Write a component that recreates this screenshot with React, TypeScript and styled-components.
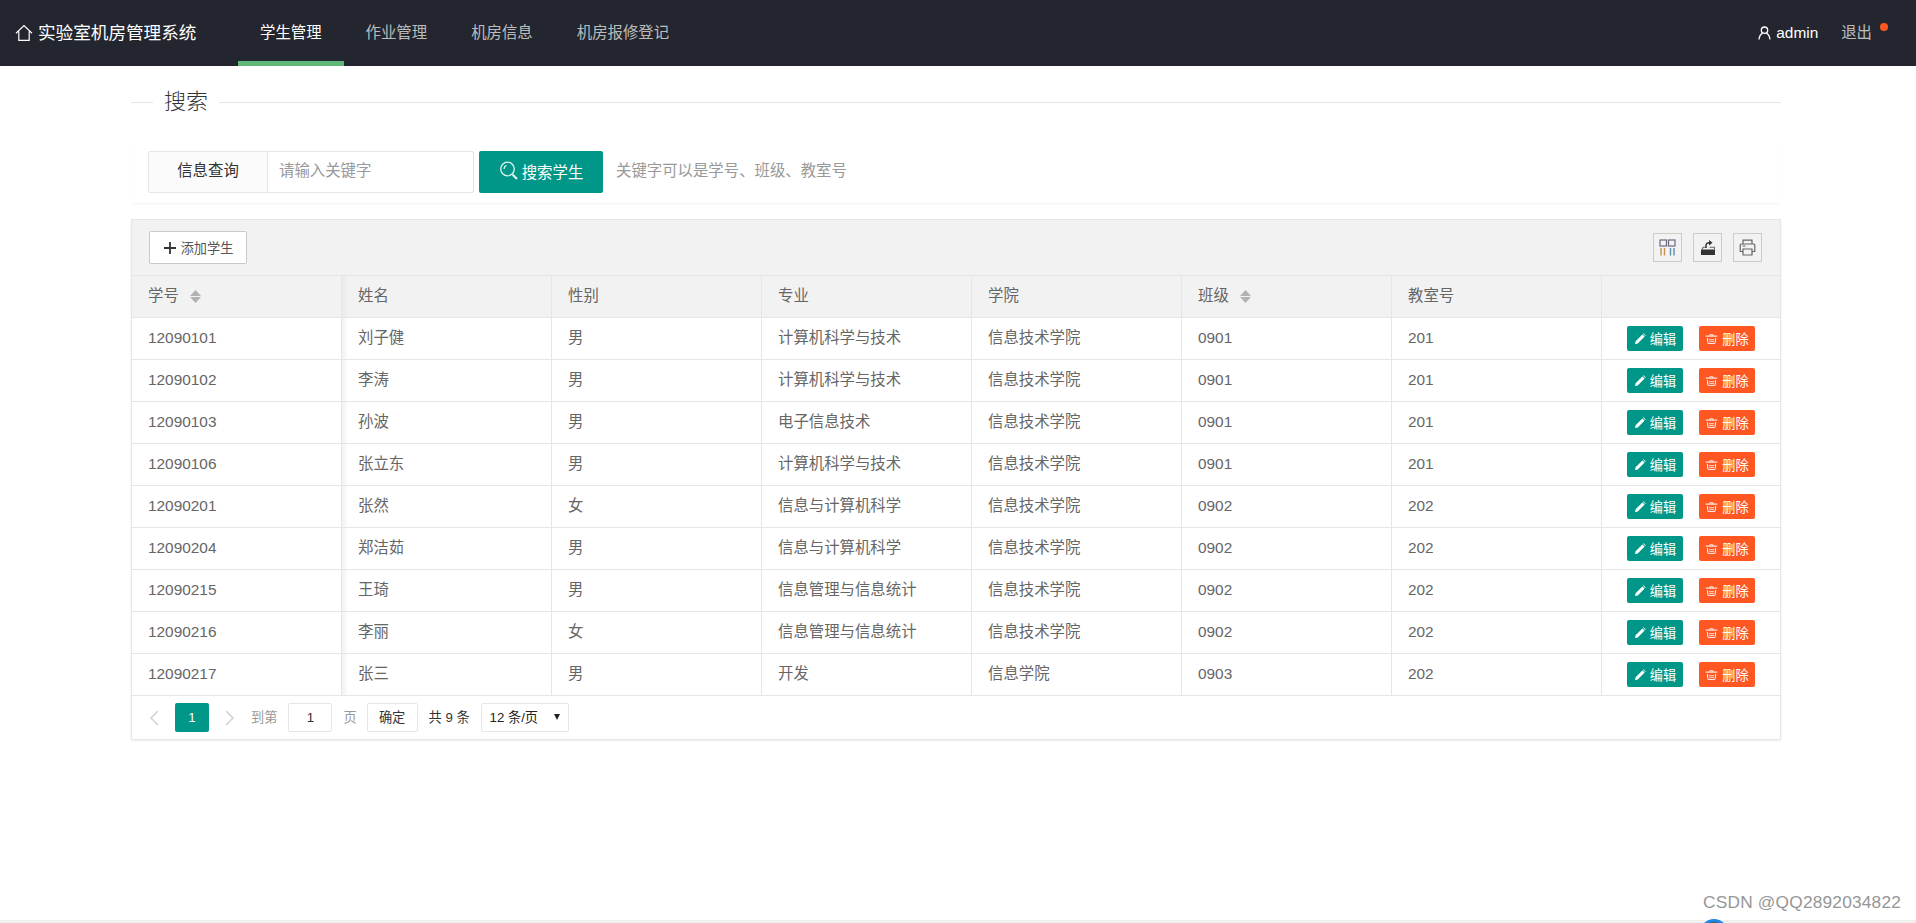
import React from "react";
import styled, { createGlobalStyle } from "styled-components";

const CJK = `"Liberation Sans", "Noto Sans CJK SC", sans-serif`;

const GlobalStyle = createGlobalStyle`
  html, body {
    margin: 0;
    padding: 0;
    background: #fff;
    overflow: hidden;
  }
  * {
    box-sizing: border-box;
  }
  body {
    font-family: ${CJK};
    font-size: 15.4px;
    line-height: 20px;
    color: #666;
  }
`;

const Page = styled.div`
  position: relative;
  display: flex;
  flex-direction: column;
  height: 923px;
  overflow: hidden;
`;

const Header = styled.header`
  display: flex;
  align-items: stretch;
  flex: 0 0 66px;
  height: 66px;
  background: #23262e;
`;

const Logo = styled.div`
  display: flex;
  align-items: center;
  gap: 5px;
  width: 238px;
  padding-left: 15px;
  color: #fff;
  font-size: 17.6px;
`;

const Nav = styled.nav`
  display: flex;
  flex: 1;
`;

const NavItem = styled.a<{ $active?: boolean }>`
  display: flex;
  align-items: center;
  justify-content: center;
  padding: 0 22px;
  color: ${(p) => (p.$active ? "#fff" : "rgba(255, 255, 255, 0.7)")};
  border-bottom: 5px solid ${(p) => (p.$active ? "#5fb878" : "transparent")};
  border-top: 5px solid transparent;
  font-size: 15.4px;
`;

const UserArea = styled.div`
  display: flex;
  align-items: center;
  padding-right: 44px;
`;

const UserName = styled.span`
  display: flex;
  align-items: center;
  gap: 5px;
  color: #fff;
  font-size: 15.4px;
`;

const Logout = styled.span`
  position: relative;
  margin-left: 23px;
  color: rgba(255, 255, 255, 0.7);
  font-size: 15.4px;
`;

const Dot = styled.i`
  position: absolute;
  top: 0;
  right: -16px;
  width: 8px;
  height: 8px;
  border-radius: 50%;
  background: #ff5722;
`;

const Main = styled.main`
  display: flex;
  flex: 1;
  flex-direction: column;
  padding: 0 135px 0 131px;
`;

const Legend = styled.div`
  display: flex;
  align-items: center;
  height: 36px;
  margin-top: 18px;
  color: #333;
  font-size: 22px;
  font-weight: 300;

  &::before,
  &::after {
    content: "";
    height: 1px;
    background: #e6e6e6;
  }
  &::before {
    flex: 0 0 22px;
  }
  &::after {
    flex: 1;
  }
`;

const LegendText = styled.span`
  padding: 0 11px;
`;

const SearchPanel = styled.div`
  display: flex;
  align-items: center;
  height: 63px;
  margin-top: 20px;
  padding: 0 17px;
  border-radius: 2px;
  box-shadow: 0 1px 2px rgba(0, 0, 0, 0.05);
`;

const SearchGroup = styled.div`
  display: flex;
  width: 326px;
  height: 42px;
  border: 1px solid #e6e6e6;
  border-radius: 2px;
`;

const SearchLabel = styled.label`
  display: flex;
  align-items: center;
  justify-content: center;
  width: 119px;
  padding-bottom: 1px;
  background: #fbfbfb;
  border-right: 1px solid #e6e6e6;
  color: #333;
  font-size: 15.4px;
`;

const SearchInput = styled.div`
  display: flex;
  flex: 1;
  align-items: center;
  padding: 0 0 1px 11px;
  color: #999;
  font-size: 15.4px;
`;

const SearchButton = styled.button`
  display: flex;
  align-items: center;
  justify-content: center;
  gap: 3px;
  width: 124px;
  height: 42px;
  margin-left: 5px;
  padding: 0 0 1px;
  border: 0;
  border-radius: 2px;
  background: #009688;
  color: #fff;
  font-family: inherit;
  font-size: 15.4px;
`;

const Hint = styled.span`
  margin: 0 0 1px 13px;
  color: #999;
  font-size: 15.4px;
`;

const TableCard = styled.section`
  margin-top: 16px;
  border: 1px solid #e6e6e6;
  box-shadow: 0 1px 2px rgba(0, 0, 0, 0.08);
`;

const Toolbar = styled.div`
  display: flex;
  align-items: center;
  justify-content: space-between;
  height: 56px;
  padding: 0 18px 0 17px;
  background: #f2f2f2;
  border-bottom: 1px solid #e6e6e6;
`;

const AddButton = styled.button`
  display: flex;
  align-items: center;
  justify-content: center;
  gap: 4px;
  width: 98px;
  height: 33px;
  padding: 0;
  border: 1px solid #c9c9c9;
  border-radius: 2px;
  background: #fff;
  color: #555;
  font-family: inherit;
  font-size: 13.2px;
`;

const ToolGroup = styled.div`
  display: flex;
  gap: 11px;
`;

const ToolButton = styled.div`
  display: flex;
  align-items: center;
  justify-content: center;
  width: 29px;
  height: 29px;
  border: 1px solid #ccc;
`;

const TableGrid = styled.div`
  display: grid;
  grid-template-columns: repeat(7, 210px) 1fr;
`;

const cellBackground = (head?: boolean, fixed?: boolean) => {
  if (head && fixed) return "linear-gradient(90deg, #e9e9e9, #f2f2f2 6px)";
  if (head) return "#f2f2f2";
  if (fixed) return "linear-gradient(90deg, #f0f0f0, #fff 6px)";
  return "#fff";
};

const Cell = styled.div<{ $head?: boolean; $fixed?: boolean; $last?: boolean }>`
  display: flex;
  align-items: center;
  gap: ${(p) => (p.$last ? "16px" : "10px")};
  height: 42px;
  padding: ${(p) => (p.$last ? "0 25px" : "0 16px 1px")};
  background: ${(p) => cellBackground(p.$head, p.$fixed)};
  border-bottom: 1px solid #e6e6e6;
  border-right: ${(p) => (p.$last ? "0" : "1px solid #e6e6e6")};
  color: #666;
  font-size: 15.4px;
`;

const SortIcon = styled.svg`
  width: 11px;
  height: 13px;
  margin-left: 1px;
`;

const RowButton = styled.button<{ $danger?: boolean }>`
  display: flex;
  align-items: center;
  justify-content: center;
  gap: 4px;
  width: 56px;
  height: 25px;
  padding: 0;
  border: 0;
  border-radius: 2px;
  background: ${(p) => (p.$danger ? "#ff5722" : "#009688")};
  color: #fff;
  font-family: inherit;
  font-size: 13.2px;
`;

const Pager = styled.div`
  display: flex;
  align-items: center;
  height: 43px;
  padding-left: 16px;
  color: #333;
  font-size: 13.2px;
`;

const PageArrow = styled.svg`
  flex: 0 0 14px;
  height: 16px;
`;

const PageCurrent = styled.span`
  display: flex;
  align-items: center;
  justify-content: center;
  width: 34px;
  height: 29px;
  margin: 0 13px;
  border-radius: 2px;
  background: #009688;
  color: #fff;
`;

const PagerMuted = styled.span<{ $gap: number }>`
  color: #999;
  margin-left: ${(p) => p.$gap}px;
`;

const PagerBox = styled.span`
  display: flex;
  align-items: center;
  height: 29px;
  border: 1px solid #e6e6e6;
  border-radius: 2px;
  background: #fff;
  color: #333;
`;

const PageInput = styled(PagerBox)`
  justify-content: center;
  width: 44px;
  margin-left: 11px;
`;

const PageOk = styled(PagerBox)`
  justify-content: center;
  width: 51px;
  margin-left: 10px;
`;

const PageTotal = styled.span`
  margin-left: 11px;
  color: #333;
`;

const PageSelect = styled(PagerBox)`
  position: relative;
  width: 88px;
  margin-left: 11px;
  padding-left: 8px;
  color: #222;
`;

const SelectCaret = styled.i`
  position: absolute;
  top: 10px;
  right: 8px;
  border-left: 3.5px solid transparent;
  border-right: 3.5px solid transparent;
  border-top: 6px solid #222;
`;

const BottomStrip = styled.div`
  flex: 0 0 3px;
  background: #f0f0f0;
`;

const Watermark = styled.div`
  position: absolute;
  right: 15px;
  bottom: 11px;
  color: #969696;
  font-size: 17.3px;
  letter-spacing: 0.2px;
`;

const Avatar = styled.i`
  position: absolute;
  left: 1700px;
  top: 919px;
  width: 28px;
  height: 28px;
  border-radius: 50%;
  border: 3px solid #1e88e5;
  background: #555;
`;

type Student = {
  id: string;
  name: string;
  sex: string;
  major: string;
  college: string;
  cls: string;
  room: string;
};

const STUDENTS: Student[] = [
  { id: "12090101", name: "刘子健", sex: "男", major: "计算机科学与技术", college: "信息技术学院", cls: "0901", room: "201" },
  { id: "12090102", name: "李涛", sex: "男", major: "计算机科学与技术", college: "信息技术学院", cls: "0901", room: "201" },
  { id: "12090103", name: "孙波", sex: "男", major: "电子信息技术", college: "信息技术学院", cls: "0901", room: "201" },
  { id: "12090106", name: "张立东", sex: "男", major: "计算机科学与技术", college: "信息技术学院", cls: "0901", room: "201" },
  { id: "12090201", name: "张然", sex: "女", major: "信息与计算机科学", college: "信息技术学院", cls: "0902", room: "202" },
  { id: "12090204", name: "郑洁茹", sex: "男", major: "信息与计算机科学", college: "信息技术学院", cls: "0902", room: "202" },
  { id: "12090215", name: "王琦", sex: "男", major: "信息管理与信息统计", college: "信息技术学院", cls: "0902", room: "202" },
  { id: "12090216", name: "李丽", sex: "女", major: "信息管理与信息统计", college: "信息技术学院", cls: "0902", room: "202" },
  { id: "12090217", name: "张三", sex: "男", major: "开发", college: "信息学院", cls: "0903", room: "202" },
];

const NAV_ITEMS = ["学生管理", "作业管理", "机房信息", "机房报修登记"];

const HomeIcon = () => (
  <svg width="18" height="18" viewBox="0 0 18 18" fill="none" stroke="#fff" strokeWidth="1.2">
    <path d="M1 9.200 9 1.600l8 7.600M3.800 7.500v8.900h10.400V7.500" />
  </svg>
);

const UserIcon = () => (
  <svg width="13" height="14" viewBox="0 0 13 14" fill="none" stroke="#fff" strokeWidth="1.3">
    <circle cx="6.500" cy="4.200" r="3.200" />
    <path d="M1 13.500c.3-3 2-5.500 3.400-6.200M12 13.500c-.3-3-2-5.500-3.400-6.200" />
  </svg>
);

const SearchIcon = () => (
  <svg width="20" height="20" viewBox="0 0 20 20" fill="none" stroke="#dff5f1" strokeWidth="1.3">
    <circle cx="8.500" cy="8" r="6.800" />
    <path d="M5 8c0-1.800 1-3 2.400-3.600" />
    <path d="m13.500 13.500 4.500 4.500" strokeWidth="2.200" />
  </svg>
);

const PlusIcon = () => (
  <svg width="14" height="14" viewBox="0 0 14 14" stroke="#333" strokeWidth="1.800">
    <path d="M7 1v12M1 7h12" />
  </svg>
);

const EditIcon = () => (
  <svg width="12" height="12" viewBox="0 0 12 12" fill="#fff">
    <path d="M1 11l.6-2.800L8.400 1.400l2.200 2.200-6.800 6.800zM9 .8l.6-.5 2.100 2.100-.5.6z" />
  </svg>
);

const TrashIcon = () => (
  <svg width="13" height="12" viewBox="0 0 13 12" fill="none" stroke="#ffe3dc" strokeWidth="1.200">
    <path d="M.8 3.200h11.400M4.500 3c.2-1 .8-1.500 2-1.500s1.800.5 2 1.500M2.500 5c0 3 .3 5.300 1 5.500h6c.7-.2 1-2.500 1-5.500" />
    <path d="M4 6.700h5M4.300 8.600h4.400" strokeWidth="1" />
  </svg>
);

const ColsIcon = () => (
  <svg width="17" height="17" viewBox="0 0 17 17" fill="none" strokeWidth="1.2">
    <rect x="1" y="1" width="6.500" height="6" stroke="#6a6a80" />
    <rect x="9.500" y="1" width="6.500" height="6" stroke="#6a6a80" />
    <path d="M2 9v7.500M5.500 9v7.500" stroke="#c9924a" strokeWidth="1.400" />
    <path d="M11.500 9v7.500M15 9v7.500" stroke="#5c8fb0" strokeWidth="1.400" />
  </svg>
);

const ExportIcon = () => (
  <svg width="16" height="17" viewBox="0 0 16 17">
    <path d="M1 10.500h14V16H1z" fill="#333" />
    <path d="M2 10.500l1.200-2.300h2.600M9.500 8.200h5v2.300" fill="none" stroke="#667" strokeWidth="1.100" />
    <path d="M6 9V6.500c0-1.800 1.400-2.700 3.500-2.700" fill="none" stroke="#333" strokeWidth="1.500" />
    <path d="M9 1l3.500 2.700L9 6.400z" fill="#333" />
  </svg>
);

const PrintIcon = () => (
  <svg width="17" height="17" viewBox="0 0 17 17" fill="none" stroke="#666" strokeWidth="1.200">
    <path d="M4 5V1.200h9V5M4 12.500H1.200V6.200c0-.7.5-1.200 1.200-1.200h12.200c.7 0 1.200.5 1.200 1.200v6.300H13" />
    <path d="M4 10h9v6H4zM3.500 7h3" />
  </svg>
);

const SortGlyph = () => (
  <SortIcon viewBox="0 0 11 13" fill="#b2b2b2">
    <path d="M5.500 0 11 6H0zM0 7h11l-5.500 6z" />
  </SortIcon>
);

function App() {
  return (
    <Page>
      <GlobalStyle />
      <Header>
        <Logo>
          <HomeIcon />
          实验室机房管理系统
        </Logo>
        <Nav>
          {NAV_ITEMS.map((item, key) => (
            <NavItem key={item} $active={key === 0}>
              {item}
            </NavItem>
          ))}
        </Nav>
        <UserArea>
          <UserName>
            <UserIcon />
            admin
          </UserName>
          <Logout>
            退出
            <Dot />
          </Logout>
        </UserArea>
      </Header>

      <Main>
        <Legend>
          <LegendText>搜索</LegendText>
        </Legend>

        <SearchPanel>
          <SearchGroup>
            <SearchLabel>信息查询</SearchLabel>
            <SearchInput>请输入关键字</SearchInput>
          </SearchGroup>
          <SearchButton>
            <SearchIcon />
            搜索学生
          </SearchButton>
          <Hint>关键字可以是学号、班级、教室号</Hint>
        </SearchPanel>

        <TableCard>
          <Toolbar>
            <AddButton>
              <PlusIcon />
              添加学生
            </AddButton>
            <ToolGroup>
              <ToolButton>
                <ColsIcon />
              </ToolButton>
              <ToolButton>
                <ExportIcon />
              </ToolButton>
              <ToolButton>
                <PrintIcon />
              </ToolButton>
            </ToolGroup>
          </Toolbar>

          <TableGrid>
            <Cell $head>
              学号
              <SortGlyph />
            </Cell>
            <Cell $head $fixed>姓名</Cell>
            <Cell $head>性别</Cell>
            <Cell $head>专业</Cell>
            <Cell $head>学院</Cell>
            <Cell $head>
              班级
              <SortGlyph />
            </Cell>
            <Cell $head>教室号</Cell>
            <Cell $head $last />

            {STUDENTS.map((s) => (
              <React.Fragment key={s.id}>
                <Cell>{s.id}</Cell>
                <Cell $fixed>{s.name}</Cell>
                <Cell>{s.sex}</Cell>
                <Cell>{s.major}</Cell>
                <Cell>{s.college}</Cell>
                <Cell>{s.cls}</Cell>
                <Cell>{s.room}</Cell>
                <Cell $last>
                  <RowButton>
                    <EditIcon />
                    编辑
                  </RowButton>
                  <RowButton $danger>
                    <TrashIcon />
                    删除
                  </RowButton>
                </Cell>
              </React.Fragment>
            ))}
          </TableGrid>

          <Pager>
            <PageArrow viewBox="0 0 14 16" fill="none" stroke="#d2d2d2" strokeWidth="1.500">
              <path d="M10 1 3 8l7 7" />
            </PageArrow>
            <PageCurrent>1</PageCurrent>
            <PageArrow viewBox="0 0 14 16" fill="none" stroke="#d2d2d2" strokeWidth="1.500">
              <path d="m4 1 7 7-7 7" />
            </PageArrow>
            <PagerMuted $gap={15}>到第</PagerMuted>
            <PageInput>1</PageInput>
            <PagerMuted $gap={11}>页</PagerMuted>
            <PageOk>确定</PageOk>
            <PageTotal>共 9 条</PageTotal>
            <PageSelect>
              12 条/页
              <SelectCaret />
            </PageSelect>
          </Pager>
        </TableCard>
      </Main>

      <BottomStrip />
      <Watermark>CSDN @QQ2892034822</Watermark>
      <Avatar />
    </Page>
  );
}

export default App;
